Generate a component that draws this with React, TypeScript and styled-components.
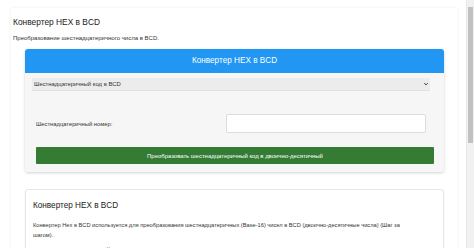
import React from 'react'
import styled, { createGlobalStyle } from 'styled-components'

const GlobalStyle = createGlobalStyle`
    html, body {
        margin: 0;
        padding: 0;
        overflow: hidden;
        background: #ffffff;
    }
    body {
        font-family: 'Liberation Sans', Arial, sans-serif;
        color: #333;
    }
`

export default function App() {
    return (
        <>
            <GlobalStyle />
            <Page>
                <Container>
                    <PageTitle>Конвертер HEX в BCD</PageTitle>
                    <Lead>Преобразование шестнадцатеричного числа в BCD.</Lead>

                    <ConverterCard>
                        <CardHeader>Конвертер HEX в BCD</CardHeader>
                        <CardBody>
                            <SelectWrap>
                                <Select defaultValue="hex-bcd">
                                    <option value="hex-bcd">Шестнадцатеричный код в BCD</option>
                                </Select>
                                <Chevron viewBox="0 0 10 10">
                                    <path d="M2 3.5 L5 6.5 L8 3.5" fill="none" stroke="#333" strokeWidth="1.6" />
                                </Chevron>
                            </SelectWrap>

                            <FormRow>
                                <Label htmlFor="hex">Шестнадцатеричный номер:</Label>
                                <Input id="hex" type="text" />
                            </FormRow>

                            <ConvertButton>Преобразовать шестнадцатеричный код в двоично-десятичный</ConvertButton>
                        </CardBody>
                    </ConverterCard>

                    <InfoCard>
                        <InfoTitle>Конвертер HEX в BCD</InfoTitle>
                        <InfoText>
                            Конвертер Hex в BCD используется для преобразования шестнадцатеричных (Base-16) чисел в BCD
                            (двоично-десятичные числа) (Шаг за шагом).
                        </InfoText>
                        <InfoSub>Шестнадцатеричный в BCD</InfoSub>
                    </InfoCard>
                </Container>
            </Page>
            <ScrollTrack>
                <ScrollThumb />
            </ScrollTrack>
        </>
    )
}

const Page = styled.div`
    height: 248px;
    padding: 8px 17px 0 11px;
    box-sizing: border-box;
`

const Container = styled.div`
    background: #fff;
    box-shadow: 0 0 3px rgba(0, 0, 0, 0.08);
    padding: 8px 13px 20px 14px;
`

const PageTitle = styled.h1`
    margin: 0 0 0 -12px;
    font-size: 8.4px;
    line-height: 13px;
    font-weight: 400;
    color: #222;
`

const Lead = styled.p`
    margin: 5px 0 0 -12px;
    font-size: 6px;
    line-height: 9px;
    color: #333;
`

const ConverterCard = styled.div`
    margin-top: 6px;
    border-radius: 3px;
    box-shadow: 0 1px 3px rgba(0, 0, 0, 0.18);
    overflow: hidden;
`

const CardHeader = styled.div`
    height: 24px;
    background: #2196f3;
    color: #fff;
    font-size: 8.2px;
    line-height: 24px;
    text-align: center;
`

const CardBody = styled.div`
    background: #f6f6f6;
    padding: 5px 10px 8px 7px;
`

const SelectWrap = styled.div`
    position: relative;
    margin-right: 4px;
`

const Select = styled.select`
    appearance: none;
    width: 100%;
    height: 13px;
    display: block;
    border: none;
    border-bottom: 1px solid #e2e2e2;
    background: #ececec;
    padding: 0 2px;
    font-family: 'Liberation Sans', Arial, sans-serif;
    font-size: 5.9px;
    color: #333;
    box-sizing: border-box;
`

const Chevron = styled.svg`
    position: absolute;
    right: 1px;
    top: 3px;
    width: 6px;
    height: 6px;
    pointer-events: none;
`

const FormRow = styled.div`
    display: flex;
    align-items: center;
    justify-content: space-between;
    margin: 23px 8px 0 4px;
`

const Label = styled.label`
    font-size: 5.8px;
    color: #333;
`

const Input = styled.input`
    width: 200px;
    height: 19px;
    box-sizing: border-box;
    border: 1px solid #dcdcdc;
    border-radius: 2px;
    background: #fff;
    margin: 0;
`

const ConvertButton = styled.button`
    display: block;
    width: calc(100% - 4px);
    margin: 14px 0 0 4px;
    height: 17px;
    border: none;
    border-radius: 1px;
    background: #347b34;
    color: #fff;
    font-family: 'Liberation Sans', Arial, sans-serif;
    font-size: 5.95px;
    padding: 0;
    cursor: pointer;
`

const InfoCard = styled.div`
    margin-top: 17px;
    background: #fff;
    border: 1px solid #e6e6e6;
    border-radius: 3px;
    box-shadow: 0 1px 2px rgba(0, 0, 0, 0.06);
    padding: 9px 24px 10px 7px;
`

const InfoTitle = styled.h2`
    margin: 0;
    font-size: 8.2px;
    line-height: 13px;
    font-weight: 400;
    color: #222;
`

const InfoText = styled.p`
    margin: 9px 0 0;
    font-size: 5.7px;
    line-height: 9.5px;
    color: #333;
`

const InfoSub = styled.h3`
    margin: 6px 0 0;
    font-size: 8px;
    font-weight: 400;
    color: #222;
`

const ScrollTrack = styled.div`
    position: fixed;
    top: 0;
    right: 0;
    width: 7px;
    height: 248px;
    background: #f1f1f1;
    border-left: 1px solid #e8e8e8;
`

const ScrollThumb = styled.div`
    margin: 7px 0 0 1px;
    width: 5px;
    height: 136px;
    background: #c1c1c1;
`
